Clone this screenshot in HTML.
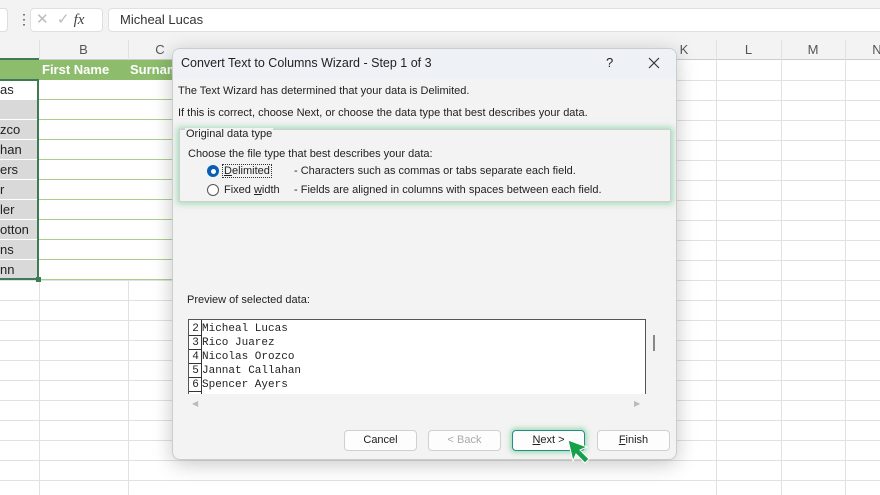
<!DOCTYPE html>
<html><head><style>
*{box-sizing:border-box;margin:0;padding:0}
body{width:880px;height:495px;overflow:hidden;background:#fff;font-family:"Liberation Sans",sans-serif;position:relative;font-size:12px;color:#222}
.abs{position:absolute}
.vl{position:absolute;top:40px;bottom:0;width:1px;background:#e1e1e1}
.hl{position:absolute;left:0;right:0;height:1px;background:#e1e1e1}
.ch{position:absolute;top:40px;height:20px;line-height:20px;text-align:center;color:#555;font-size:13px}
.cell{position:absolute;left:0;width:39px;height:20px;line-height:20px;font-size:13px;color:#222;text-align:left;overflow:hidden;white-space:nowrap;background:#d9d9d9;border-bottom:1px solid #fff}
.btn{position:absolute;top:430px;height:21px;width:73px;border:1px solid #d0d0d0;border-radius:4px;background:#fdfdfd;text-align:center;line-height:19px;font-size:11px;color:#222}
.row{height:14px;line-height:14px;font-family:"Liberation Mono",monospace;font-size:11px;white-space:nowrap}
.row b{font-weight:normal;display:inline-block;width:13px;height:14px;border-bottom:1px solid #333;text-align:center}
</style></head><body>
<div class="abs" style="left:0;top:0;width:880px;height:40px;background:#f3f3f3"></div>
<div class="abs" style="left:-6px;top:8px;width:14px;height:24px;background:#fff;border:1px solid #ddd;border-radius:4px"></div>
<div class="abs" style="left:17px;top:11px;font-size:14px;color:#444">⋮</div>
<div class="abs" style="left:30px;top:8px;width:73px;height:24px;background:#fff;border:1px solid #e0e0e0;border-radius:4px;color:#bbb;font-size:15px;line-height:22px;padding-left:5px">✕&nbsp;&nbsp;✓ <span style="color:#444;font-family:'Liberation Serif',serif;font-style:italic">fx</span></div>
<div class="abs" style="left:108px;top:8px;width:780px;height:24px;background:#fff;border:1px solid #e0e0e0;border-radius:4px;font-size:13px;line-height:22px;padding-left:11px;color:#333">Micheal Lucas</div>
<div class="abs" style="left:0;top:40px;width:880px;height:20px;background:#f3f3f3;border-bottom:1px solid #ccc"></div>
<div class="abs" style="left:0;top:58px;width:39px;height:2px;background:#3d7a55"></div>
<div class="vl" style="left:39px"></div><div class="vl" style="left:128px"></div>
<div class="vl" style="left:716px"></div><div class="vl" style="left:781px"></div><div class="vl" style="left:845px"></div>
<div class="ch" style="left:39px;width:89px">B</div>
<div class="ch" style="left:128px;width:64px">C</div>
<div class="ch" style="left:652px;width:64px">K</div>
<div class="ch" style="left:716px;width:65px">L</div>
<div class="ch" style="left:781px;width:64px">M</div>
<div class="ch" style="left:845px;width:64px">N</div>
<div class="hl" style="top:80px"></div><div class="hl" style="top:100px"></div><div class="hl" style="top:120px"></div><div class="hl" style="top:140px"></div><div class="hl" style="top:160px"></div><div class="hl" style="top:180px"></div><div class="hl" style="top:200px"></div><div class="hl" style="top:220px"></div><div class="hl" style="top:240px"></div><div class="hl" style="top:260px"></div><div class="hl" style="top:280px"></div><div class="hl" style="top:300px"></div><div class="hl" style="top:320px"></div><div class="hl" style="top:340px"></div><div class="hl" style="top:360px"></div><div class="hl" style="top:380px"></div><div class="hl" style="top:400px"></div><div class="hl" style="top:420px"></div><div class="hl" style="top:440px"></div><div class="hl" style="top:460px"></div><div class="hl" style="top:480px"></div>
<div class="abs" style="left:39px;top:80px;width:140px;height:200px;background:repeating-linear-gradient(#fff 0 19px,#a9cf8f 19px 20px)"></div>
<div class="abs" style="left:0;top:60px;width:180px;height:20px;background:#8cbc6c;color:#fff;font-weight:bold;font-size:13px;line-height:20px"><span style="position:absolute;left:42px">First Name</span><span style="position:absolute;left:130px">Surnam</span></div>
<div class="cell" style="top:80px;background:#fff">as</div>
<div class="cell" style="top:100px"></div>
<div class="cell" style="top:120px">zco</div>
<div class="cell" style="top:140px">han</div>
<div class="cell" style="top:160px">ers</div>
<div class="cell" style="top:180px">r</div>
<div class="cell" style="top:200px">ler</div>
<div class="cell" style="top:220px">otton</div>
<div class="cell" style="top:240px">ns</div>
<div class="cell" style="top:260px">nn</div>
<div class="abs" style="left:-2px;top:79px;width:41px;height:201px;border:2px solid #3d7a55"></div>
<div class="abs" style="left:36px;top:277px;width:5px;height:5px;background:#3d7a55"></div>
<div class="abs" style="left:172px;top:48px;width:505px;height:412px;background:#f3f3f3;border:1px solid #ccc;border-radius:8px;box-shadow:0 4px 20px rgba(0,0,0,.22);overflow:hidden">
 <div class="abs" style="left:0;top:0;width:505px;height:30px;background:#eef2f6"></div>
 <div class="abs" style="left:8px;top:7px;font-size:12.5px;color:#222">Convert Text to Columns Wizard - Step 1 of 3</div>
 <div class="abs" style="left:433px;top:6px;font-size:13px">?</div>
 <svg class="abs" style="left:475px;top:8px" width="12" height="12"><path d="M1 1L11 11M11 1L1 11" stroke="#333" stroke-width="1.2"/></svg>
 <div class="abs" style="left:5px;top:36px;font-size:11px">The Text Wizard has determined that your data is Delimited.</div>
 <div class="abs" style="left:5px;top:58px;font-size:11px">If this is correct, choose Next, or choose the data type that best describes your data.</div>
 <div class="abs" style="left:6px;top:80px;width:492px;height:73px;border:1px solid #cfcfcf;box-shadow:0 0 6px 2px rgba(100,200,140,.55)"></div>
 <div class="abs" style="left:12px;top:79px;font-size:11px;background:#f3f3f3;padding:0 1px">Original data type</div>
 <div class="abs" style="left:15px;top:99px;font-size:11px">Choose the file type that best describes your data:</div>
 <div class="abs" style="left:34px;top:116px;width:12px;height:12px;border-radius:50%;background:#0a5fb5"><div style="position:absolute;left:3.5px;top:3.5px;width:5px;height:5px;border-radius:50%;background:#fff"></div></div>
 <div class="abs" style="left:49px;top:115px;font-size:11px;border:1px dotted #333;padding:0 1px"><u>D</u>elimited</div>
 <div class="abs" style="left:121px;top:116px;font-size:11px">- Characters such as commas or tabs separate each field.</div>
 <div class="abs" style="left:34px;top:135px;width:12px;height:12px;border-radius:50%;border:1px solid #555;background:#fff"></div>
 <div class="abs" style="left:51px;top:135px;font-size:11px">Fixed <u>w</u>idth</div>
 <div class="abs" style="left:121px;top:135px;font-size:11px">- Fields are aligned in columns with spaces between each field.</div>
 <div class="abs" style="left:14px;top:245px;font-size:11px">Preview of selected data:</div>
 <div class="abs" style="left:15px;top:270px;width:458px;height:75px;background:#fff;border:1px solid #555;border-bottom:none;overflow:hidden">
  <div class="abs" style="left:0;top:0;width:13px;height:76px;border-right:1px solid #333"></div>
  <div class="abs" style="left:0;top:2px;width:300px">
   <div class="row"><b>2</b>Micheal Lucas</div>
   <div class="row"><b>3</b>Rico Juarez</div>
   <div class="row"><b>4</b>Nicolas Orozco</div>
   <div class="row"><b>5</b>Jannat Callahan</div>
   <div class="row"><b>6</b>Spencer Ayers</div>
  </div>
 </div>
 <div class="abs" style="left:480px;top:286px;width:2px;height:16px;background:#888"></div>
 <div class="abs" style="left:19px;top:350px;font-size:8px;color:#bbb">◀</div>
 <div class="abs" style="left:461px;top:350px;font-size:8px;color:#bbb">▶</div>
</div>
<div class="btn" style="left:344px">Cancel</div>
<div class="btn" style="left:428px;color:#aaa">&lt; Back</div>
<div class="btn" style="left:512px;border:1px solid #2a8a8a;box-shadow:0 0 5px 2px rgba(80,200,120,.5)"><u>N</u>ext &gt;</div>
<div class="btn" style="left:597px"><u>F</u>inish</div>
<svg class="abs" style="left:565px;top:437px" width="30" height="30" viewBox="0 0 30 30"><path d="M3 3 L22 10 L15 13 L24 22 L20 26 L11 17 L8 24 Z" fill="#17a04a" stroke="#fff" stroke-width="1"/></svg>
</body></html>
